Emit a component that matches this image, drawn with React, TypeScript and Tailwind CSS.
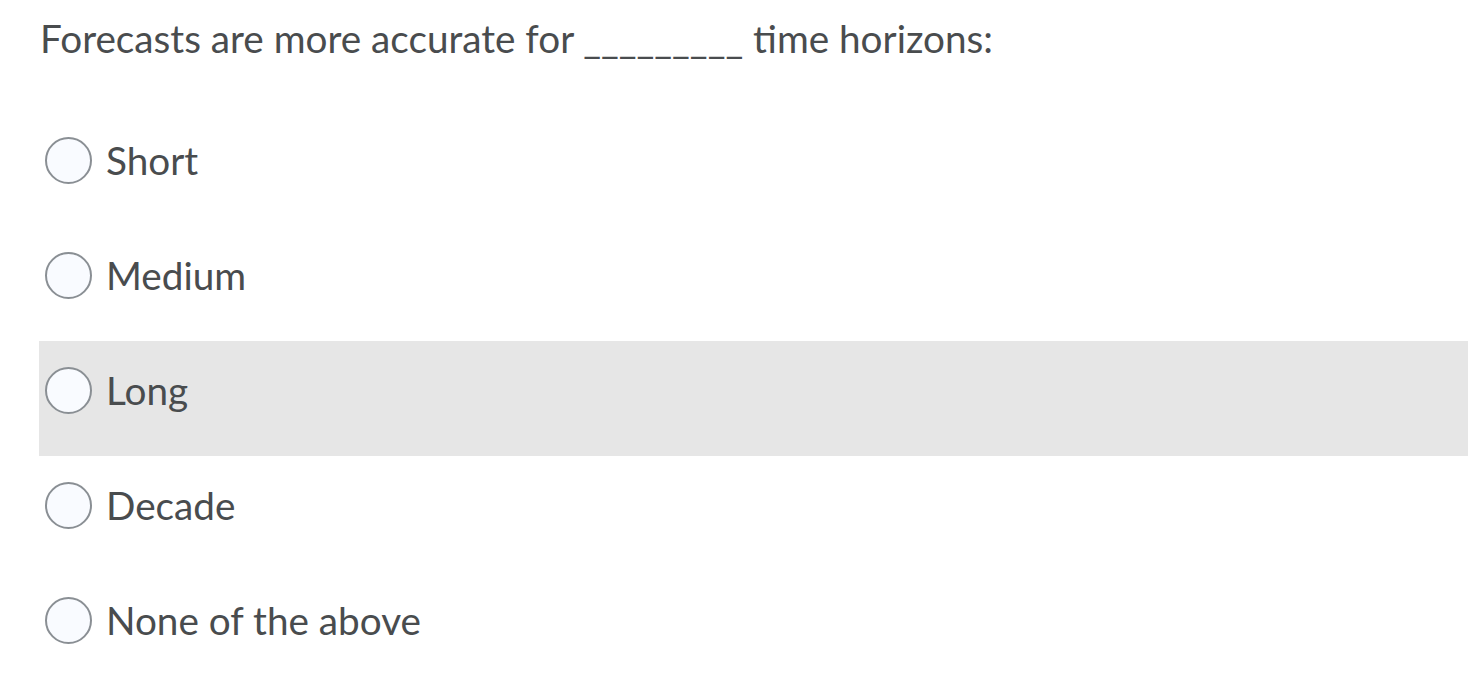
const options = ['Short', 'Medium', 'Long', 'Decade', 'None of the above']

function Radio() {
  return <span className="block h-[47px] w-[47px] shrink-0 rounded-full border-2 border-[#8a8f94] bg-[#f9fbff]" />
}

export default function App() {
  return (
    <div className="min-h-screen bg-white pl-[39px] font-['Lato','Noto_Sans',sans-serif] text-[#494c4e]">
      <p className="pt-[11px] pl-px text-[38.7px] leading-[54px]">
        Forecasts are more accurate for _________ time horizons:
      </p>
      <div className="mt-[46px] flex flex-col">
        {options.map((o) => (
          <label
            key={o}
            className={'flex h-[115px] items-start gap-[14px] pl-[6px] pt-[26px] ' + (o === 'Long' ? 'bg-[#e6e6e6]' : '')}
          >
            <Radio />
            <span className="text-[38.7px] leading-[47px]">{o}</span>
          </label>
        ))}
      </div>
    </div>
  )
}
